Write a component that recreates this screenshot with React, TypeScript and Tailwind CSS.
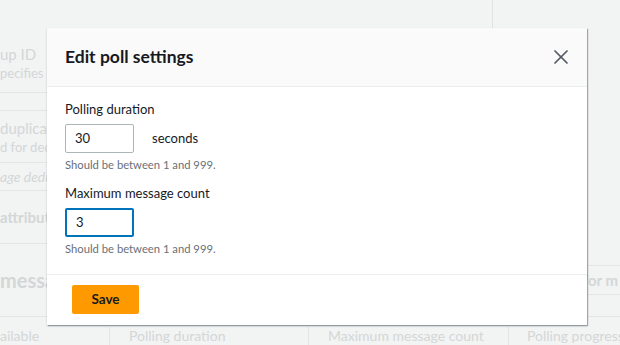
import { X } from "lucide-react";

const font = { fontFamily: "Lato, 'Noto Sans', sans-serif" };

function Background() {
  return (
    <div className="flex h-[345px] w-[620px] flex-col bg-[#f2f3f3] text-[#d3d7d7]">
      <div className="flex h-[28px]">
        <div className="w-[493px] border-r border-[#dfe3e3]" />
      </div>
      <div className="flex h-[65px] w-[140px] flex-col justify-center border-b border-[#e3e6e6] pt-[6px]">
        <span className="text-[15px] leading-[20px]">up ID</span>
        <span className="text-[13px] leading-[18px]">pecifies th</span>
      </div>
      <div className="h-[18px] w-[140px] border-b border-[#e3e6e6]" />
      <div className="flex h-[53px] w-[140px] flex-col justify-center border-b border-[#e3e6e6]">
        <span className="text-[15px] leading-[20px]">duplicatio</span>
        <span className="text-[13px] leading-[18px]">d for dedu</span>
      </div>
      <div className="flex h-[28px] w-[140px] items-center border-b border-[#e3e6e6]">
        <span className="text-[14px] italic">age dedu</span>
      </div>
      <div className="flex h-[53px] w-[140px] items-center border-b border-[#e3e6e6]">
        <span className="text-[15px] font-bold">attribut</span>
      </div>
      <div className="flex h-[73px] items-center justify-between border-b border-[#e3e6e6]">
        <span className="text-[20px] font-bold">messag</span>
        <div className="flex h-[30px] items-center border-y border-[#e3e6e6] pl-[4px] pr-[2px]">
          <span className="text-[15px] font-bold">for m</span>
        </div>
      </div>
      <div className="flex flex-1 items-start pt-[10px] text-[14px] leading-[18px]">
        <div className="w-[110px] shrink-0 border-r border-[#e3e6e6]">ailable</div>
        <div className="w-[199px] shrink-0 border-r border-[#e3e6e6] pl-[19px]">Polling duration</div>
        <div className="w-[200px] shrink-0 border-r border-[#e3e6e6] pl-[19px] whitespace-nowrap">Maximum message count</div>
        <div className="shrink-0 pl-[18px] whitespace-nowrap">Polling progress</div>
      </div>
    </div>
  );
}

function NumberField({ label, value, focused }: { label: string; value: string; focused?: boolean }) {
  return (
    <div className="flex flex-col">
      <label className="text-[13px] leading-[20px] text-[#16191f]">{label}</label>
      <div className="mt-[5px] flex items-center">
        <div
          className={`flex h-[29px] w-[69px] items-center rounded-[2px] px-[9px] text-[13px] text-[#16191f] ${
            focused ? "border-2 border-[#0073bb]" : "border border-[#aab7b8]"
          }`}
        >
          {value}
        </div>
        {!focused && <span className="ml-[18px] text-[13px] text-[#16191f]">seconds</span>}
      </div>
      <span className="mt-[4px] text-[11.25px] leading-[16px] text-[#687078]">Should be between 1 and 999.</span>
    </div>
  );
}

export default function App() {
  return (
    <div className="relative h-[345px] w-[620px] overflow-hidden" style={font}>
      <Background />
      <div className="absolute left-[47px] top-[28px] flex h-[297px] w-[540px] flex-col bg-white shadow-[1px_1px_1px_0_rgba(0,28,36,0.3),0_1px_2px_0_rgba(0,28,36,0.2)]">
        <div className="flex h-[59px] items-center justify-between border-b border-[#eaeded] bg-[#fafafa] pl-[18px] pr-[14px]">
          <h2 className="text-[17.5px] font-bold text-[#16191f]">Edit poll settings</h2>
          <X size={24} strokeWidth={1.75} className="text-[#545b64]" />
        </div>
        <div className="flex h-[187px] flex-col gap-[10px] px-[18px] pt-[12px]">
          <NumberField label="Polling duration" value="30" />
          <NumberField label="Maximum message count" value="3" focused />
        </div>
        <div className="flex flex-1 items-start border-t border-[#eaeded] pl-[25px] pt-[10px]">
          <button className="h-[29px] w-[67px] rounded-[2px] bg-[#ff9900] text-[13.5px] font-bold text-[#16191f]">Save</button>
        </div>
      </div>
    </div>
  );
}
